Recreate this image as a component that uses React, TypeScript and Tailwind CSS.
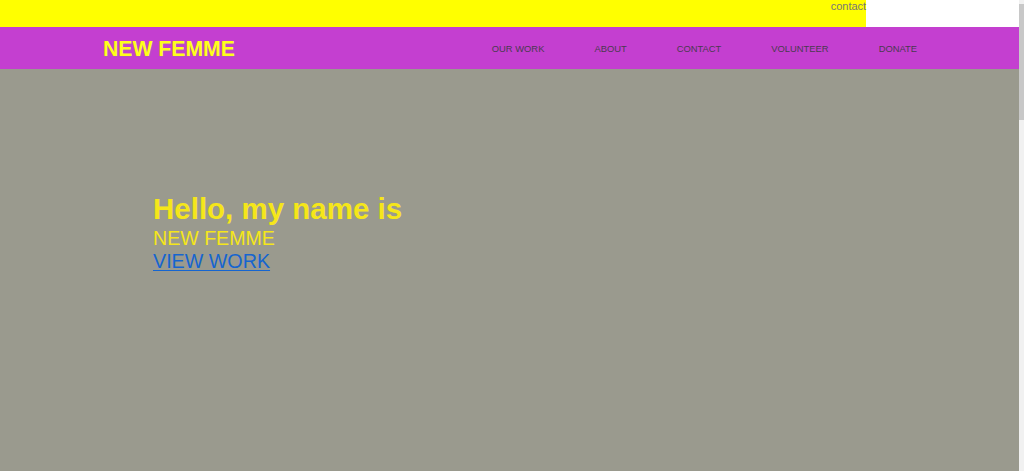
import React from "react";

export default function App() {
  const links = ["OUR WORK", "ABOUT", "CONTACT", "VOLUNTEER", "DONATE"];
  return (
    <div
      className="flex h-[471px] w-full overflow-hidden bg-white"
      style={{ fontFamily: '"Liberation Sans", Arial, sans-serif' }}
    >
      <div className="flex w-[1019px] shrink-0 flex-col">
        {/* top strip */}
        <div className="flex h-[27px] bg-white">
          <div className="w-[85%] bg-[#ffff00] text-right text-[11px] leading-[13px] text-[#777777]">
            contact
          </div>
        </div>
        {/* nav */}
        <div className="flex h-[42px] items-center justify-between bg-[#c43fd0] pl-[103px] pr-[102px] pt-[2px]">
          <div
            className="text-[21.2px] font-bold leading-none text-[#ffff1a]"
            style={{ textShadow: "1px 1px 1px #b05ab8" }}
          >
            NEW FEMME
          </div>
          <nav className="flex gap-[50px]">
            {links.map((l) => (
              <a key={l} className="text-[9.4px] leading-none text-[#4a3a4f]">
                {l}
              </a>
            ))}
          </nav>
        </div>
        {/* hero */}
        <div className="flex-1 bg-[#9a9a8e] pl-[153px] pt-[123px]">
          <h1 className="text-[29.5px] font-bold leading-[34px] text-[#f5e61a]">
            Hello, my name is
          </h1>
          <div className="text-[19.6px] leading-[24px] text-[#f5e61a]">NEW FEMME</div>
          <a className="block w-fit text-[19.7px] leading-[23px] text-[#1565d0] underline underline-offset-[2px]">
            VIEW WORK
          </a>
        </div>
      </div>
      {/* scrollbar */}
      <div className="flex w-[5px] flex-col bg-[#f1f1f1]">
        <div className="h-[4px] bg-[#f1f1f1]" />
        <div className="h-[116px] bg-[#c8c8c8]" />
        <div className="flex-1" />
      </div>
    </div>
  );
}
